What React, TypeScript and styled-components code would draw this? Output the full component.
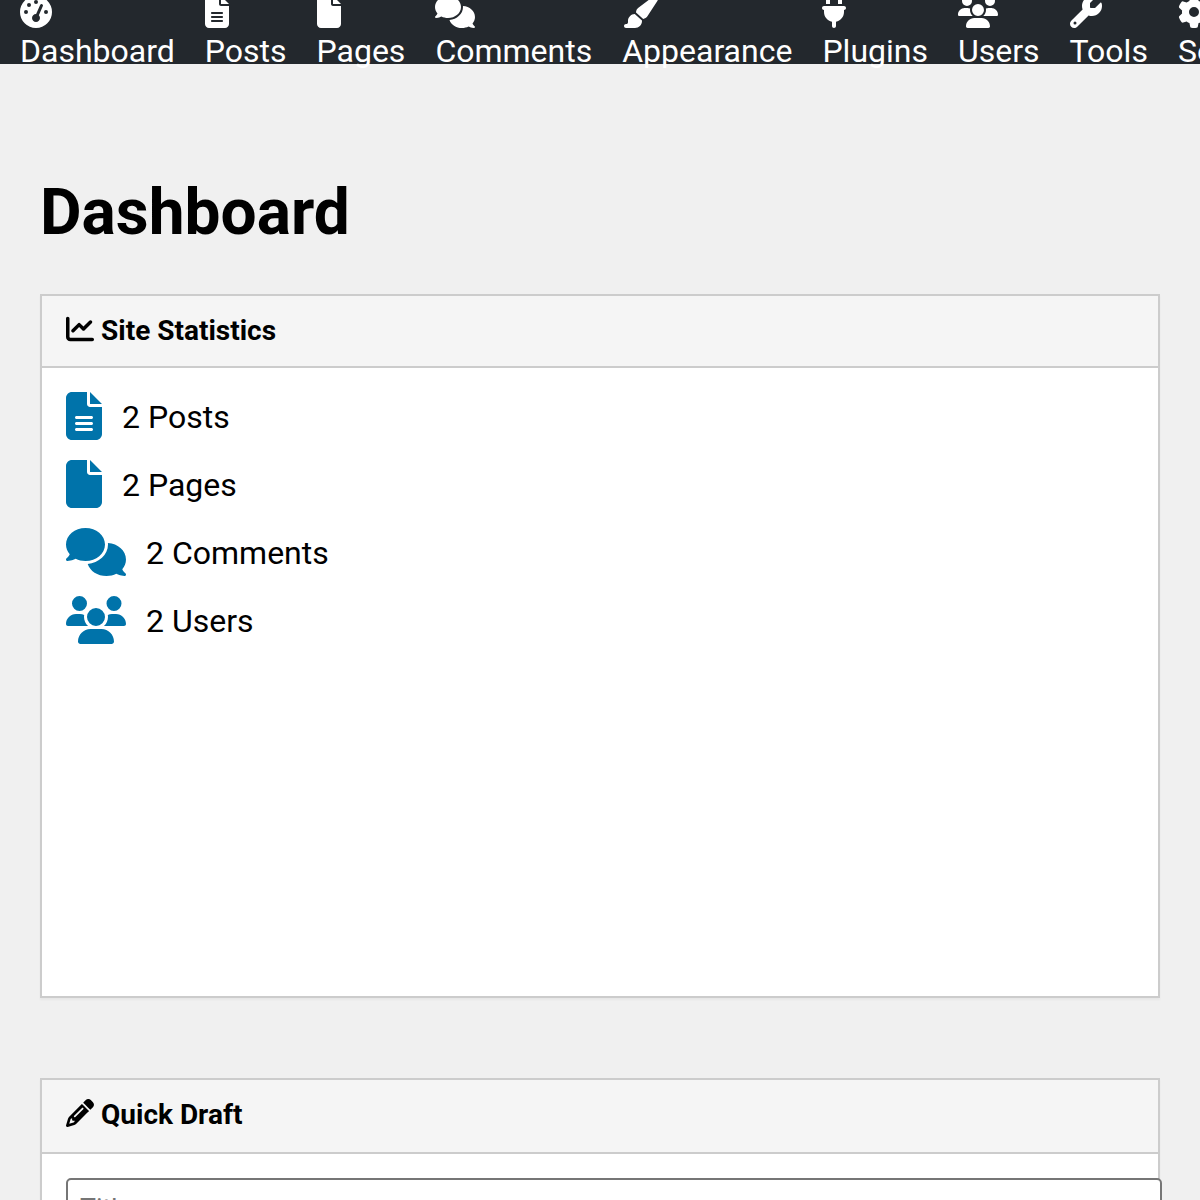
import React from 'react';
import styled, { createGlobalStyle } from 'styled-components';
import type { IconType } from 'react-icons';
import {
  FaGaugeHigh,
  FaFileLines,
  FaFile,
  FaComments,
  FaPaintbrush,
  FaPlug,
  FaUsers,
  FaWrench,
  FaGear,
  FaChartLine,
  FaPencil,
} from 'react-icons/fa6';

const GlobalStyle = createGlobalStyle`
  *, *::before, *::after { box-sizing: border-box; }
  html { overflow: hidden; }
  body {
    margin: 0;
    background: #f0f0f0;
    color: #000;
    font-family: Roboto, "Liberation Sans", sans-serif;
    font-size: 32px;
  }
`;

const Page = styled.div`
  height: 1200px;
  overflow: hidden;
`;

const NavBar = styled.nav`
  display: flex;
  align-items: center;
  height: 64px;
  padding: 2px 20px 0;
  background: #23282d;
`;

const NavList = styled.ul`
  display: flex;
  gap: 30px;
  margin: 0;
  padding: 0;
  list-style: none;
`;

const NavItem = styled.li`
  flex: none;
`;

const NavLink = styled.a`
  display: flex;
  flex-direction: column;
  align-items: flex-start;
  gap: 4px;
  color: #fff;
  line-height: 38px;
  text-decoration: none;
`;

const IconBox = styled.span<{ $width: number; $height: number; $color?: string }>`
  display: block;
  flex: none;
  width: ${(p) => p.$width}px;
  height: ${(p) => p.$height}px;
  color: ${(p) => p.$color ?? 'inherit'};

  svg {
    display: block;
    width: 100%;
    height: 100%;
  }
`;

const Main = styled.main`
  padding: 111px 40px 0;
`;

const Title = styled.h1`
  margin: 0 0 44px;
  font-size: 64px;
  font-weight: 700;
  line-height: 75px;
`;

const Card = styled.section<{ $height: number }>`
  height: ${(p) => p.$height}px;
  margin-bottom: 80px;
  border: 2px solid #ccc;
  background: #fff;
  box-shadow: 0 2px 2px rgba(0, 0, 0, 0.04);
`;

const CardHeader = styled.h2<{ $height: number }>`
  display: flex;
  align-items: flex-start;
  gap: 7px;
  height: ${(p) => p.$height}px;
  margin: 0;
  padding: 18px 24px 0;
  border-bottom: 2px solid #ccc;
  background: #f5f5f5;
  font-size: 28px;
  font-weight: 700;
  line-height: 33px;

  ${IconBox} {
    margin-top: 1px;
  }
`;

const CardBody = styled.div`
  padding: 24px;
`;

const StatList = styled.ul`
  display: flex;
  flex-direction: column;
  gap: 20px;
  margin: 0;
  padding: 0;
  list-style: none;
`;

const StatRow = styled.li`
  display: flex;
  align-items: center;
  gap: 20px;
  height: 48px;
`;

const StatText = styled.span`
  padding-top: 2px;
  line-height: 38px;
`;

const TitleInput = styled.input`
  display: block;
  width: 1096px;
  height: 60px;
  padding: 10px 12px;
  border: 2px solid #767676;
  border-radius: 5px;
  background: #fff;
  font-family: Roboto, "Liberation Sans", sans-serif;
  font-size: 26.67px;

  &::placeholder { color: #757575; }
`;

type Entry = { label: string; icon: IconType; width: number };

const navEntries: Entry[] = [
  { label: 'Dashboard', icon: FaGaugeHigh, width: 32 },
  { label: 'Posts', icon: FaFileLines, width: 24 },
  { label: 'Pages', icon: FaFile, width: 24 },
  { label: 'Comments', icon: FaComments, width: 40 },
  { label: 'Appearance', icon: FaPaintbrush, width: 36 },
  { label: 'Plugins', icon: FaPlug, width: 24 },
  { label: 'Users', icon: FaUsers, width: 40 },
  { label: 'Tools', icon: FaWrench, width: 32 },
  { label: 'Settings', icon: FaGear, width: 32 },
];

const statEntries: Entry[] = [
  { label: '2 Posts', icon: FaFileLines, width: 36 },
  { label: '2 Pages', icon: FaFile, width: 36 },
  { label: '2 Comments', icon: FaComments, width: 60 },
  { label: '2 Users', icon: FaUsers, width: 60 },
];

export default function App() {
  return (
    <Page>
      <GlobalStyle />
      <NavBar>
        <NavList>
          {navEntries.map(({ label, icon: Icon, width }) => (
            <NavItem key={label}>
              <NavLink>
                <IconBox $width={width} $height={32}><Icon /></IconBox>
                {label}
              </NavLink>
            </NavItem>
          ))}
        </NavList>
      </NavBar>
      <Main>
        <Title>Dashboard</Title>
        <Card $height={704}>
          <CardHeader $height={72}>
            <IconBox $width={28} $height={28}><FaChartLine /></IconBox>
            Site Statistics
          </CardHeader>
          <CardBody>
            <StatList>
              {statEntries.map(({ label, icon: Icon, width }) => (
                <StatRow key={label}>
                  <IconBox $width={width} $height={48} $color="#0073aa"><Icon /></IconBox>
                  <StatText>{label}</StatText>
                </StatRow>
              ))}
            </StatList>
          </CardBody>
        </Card>
        <Card $height={704}>
          <CardHeader $height={74}>
            <IconBox $width={28} $height={28}><FaPencil /></IconBox>
            Quick Draft
          </CardHeader>
          <CardBody>
            <TitleInput placeholder="Title" aria-label="Title" />
          </CardBody>
        </Card>
      </Main>
    </Page>
  );
}
